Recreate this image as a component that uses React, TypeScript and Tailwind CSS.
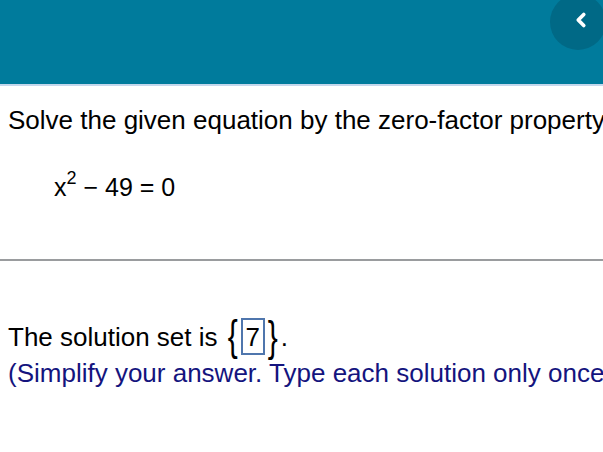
// Zero-factor property exercise — header bar, prompt, equation and answer row.
import { ChevronLeft } from 'lucide-react';

const FONT = { fontFamily: '"Liberation Sans", Arial, sans-serif' };

function Brace({ char }: { char: string }) {
  return (
    <span className="inline-block origin-center scale-y-[1.4] text-[30px] font-light leading-none">
      {char}
    </span>
  );
}

export default function App() {
  return (
    <div className="h-[452px] w-[603px] overflow-hidden bg-white text-black" style={FONT}>
      <header className="relative h-[86px] border-b-2 border-[#c4d7ec] bg-[#007b9c]">
        <button
          type="button"
          aria-label="Back"
          className="absolute -top-[6px] -right-[3px] flex h-[56px] w-[56px] items-center justify-center rounded-full bg-[#006986] pb-[5px] pl-[6px] text-white"
        >
          <ChevronLeft className="h-[22px] w-[22px]" strokeWidth={4} />
        </button>
      </header>

      <p className="mt-[19px] whitespace-nowrap pl-[8px] text-[26px] leading-[30px]">
        Solve the given equation by the zero-factor property.
      </p>

      <p className="mt-[38px] pl-[54px] text-[25px] leading-[28px]">
        x<sup className="-top-[12px] text-[18px]">2</sup> − 49 = 0
      </p>

      <hr className="mt-[58px] border-t-2 border-[#9a9c9e]" />

      <div className="mt-[57px] whitespace-nowrap pl-[8px] text-[26px] leading-[30px]">
        <div className="flex items-center">
          <span>The solution set is&nbsp;</span>
          <span className="ml-[3px]">
            <Brace char="{" />
          </span>
          <span className="mx-[3px] inline-flex h-[37px] w-[24px] items-center justify-center border-2 border-[#4f76ad]">
            7
          </span>
          <Brace char="}" />
          <span className="ml-[3px]">.</span>
        </div>
        <p className="mt-[3px] text-[#14147e]">
          (Simplify your answer. Type each solution only once.)
        </p>
      </div>
    </div>
  );
}
